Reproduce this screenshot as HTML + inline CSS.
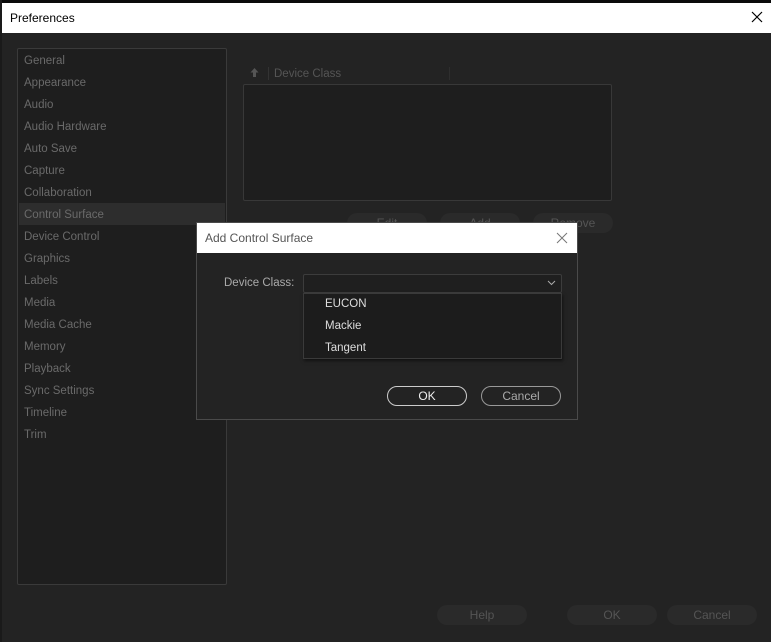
<!DOCTYPE html>
<html><head><style>
*{margin:0;padding:0;box-sizing:border-box}
body{width:771px;height:642px;background:#232323;position:relative;overflow:hidden;font-family:"Liberation Sans",sans-serif;font-size:12px}
.abs{position:absolute;white-space:nowrap}
.side{left:17px;top:48px;width:210px;height:537px;background:#1e1e1e;border:1px solid #3a3a3a;border-radius:2px}
.item{position:absolute;left:6px;color:#6a6a6a;font-size:11.5px;height:22px;line-height:22px;white-space:nowrap}
.sel{left:19px;top:203px;width:206px;height:22px;background:#2d2d2d}
.btn{position:absolute;border-radius:11px;background:#2a2a2a;color:#555;text-align:center;font-size:12px;height:20px;line-height:20px}
</style></head><body>
<div class="abs" style="left:0;top:0;width:771px;height:3px;background:#0a0a0a"></div>
<div class="abs" style="left:0;top:0;width:2px;height:642px;background:#1a1a1a"></div>
<div class="abs" style="left:2px;top:3px;width:769px;height:30px;background:#fff"></div>
<div class="abs" style="left:10px;top:11px;color:#000;font-size:12px">Preferences</div>
<svg class="abs" style="left:751px;top:11px" width="12" height="12"><path d="M1 1L11 11M11 1L1 11" stroke="#000" stroke-width="1.2"/></svg>
<div class="abs side"></div>
<div class="abs sel"></div>
<div class="abs" style="left:18px;top:50px;width:200px">
<div class="item" style="top:0">General</div>
<div class="item" style="top:22px">Appearance</div>
<div class="item" style="top:44px">Audio</div>
<div class="item" style="top:66px">Audio Hardware</div>
<div class="item" style="top:88px">Auto Save</div>
<div class="item" style="top:110px">Capture</div>
<div class="item" style="top:132px">Collaboration</div>
<div class="item" style="top:154px">Control Surface</div>
<div class="item" style="top:176px">Device Control</div>
<div class="item" style="top:198px">Graphics</div>
<div class="item" style="top:220px">Labels</div>
<div class="item" style="top:242px">Media</div>
<div class="item" style="top:264px">Media Cache</div>
<div class="item" style="top:286px">Memory</div>
<div class="item" style="top:308px">Playback</div>
<div class="item" style="top:330px">Sync Settings</div>
<div class="item" style="top:352px">Timeline</div>
<div class="item" style="top:374px">Trim</div>
</div>
<svg class="abs" style="left:250px;top:68px" width="9" height="10"><path d="M4.5 0L8.5 4.5H6V9H3V4.5H0.5Z" fill="#555"/></svg>
<div class="abs" style="left:268px;top:67px;width:1px;height:13px;background:#333"></div>
<div class="abs" style="left:274px;top:68px;color:#555;font-size:11.5px">Device Class</div>
<div class="abs" style="left:449px;top:67px;width:1px;height:13px;background:#2e2e2e"></div>
<div class="abs" style="left:243px;top:84px;width:369px;height:117px;background:#1e1e1e;border:1px solid #383838;border-radius:2px"></div>
<div class="btn" style="left:347px;top:213px;width:80px">Edit</div>
<div class="btn" style="left:440px;top:213px;width:80px">Add</div>
<div class="btn" style="left:533px;top:213px;width:80px">Remove</div>
<div class="btn" style="left:437px;top:605px;width:90px">Help</div>
<div class="btn" style="left:567px;top:605px;width:90px">OK</div>
<div class="btn" style="left:667px;top:605px;width:90px">Cancel</div>

<div class="abs" style="left:196px;top:222px;width:382px;height:198px;background:#232323;border:1px solid #4a4a4a"></div>
<div class="abs" style="left:197px;top:223px;width:380px;height:30px;background:#fff"></div>
<div class="abs" style="left:205px;top:231px;color:#555;font-size:12px">Add Control Surface</div>
<svg class="abs" style="left:556px;top:232px" width="12" height="12"><path d="M1 1L11 11M11 1L1 11" stroke="#777" stroke-width="1"/></svg>
<div class="abs" style="left:224px;top:277px;color:#aaa;font-size:11.5px">Device Class:</div>
<div class="abs" style="left:303px;top:274px;width:259px;height:19px;background:#1f1f1f;border:1px solid #3c3c3c;border-radius:2px"></div>
<svg class="abs" style="left:547px;top:280px" width="9" height="6"><path d="M1 1L4.5 4.5L8 1" stroke="#aaa" fill="none"/></svg>
<div class="abs" style="left:303px;top:293px;width:259px;height:66px;background:#1c1c1c;border:1px solid #3a3a3a;box-shadow:1px 2px 3px rgba(0,0,0,.5)"></div>
<div class="abs" style="left:325px;top:298px;color:#ddd;font-size:11.5px">EUCON</div>
<div class="abs" style="left:325px;top:320px;color:#ddd;font-size:11.5px">Mackie</div>
<div class="abs" style="left:325px;top:342px;color:#ddd;font-size:11.5px">Tangent</div>
<div class="abs" style="left:387px;top:386px;width:80px;height:20px;border:1px solid #ccc;border-radius:10px;color:#eee;text-align:center;line-height:18px;font-size:12px">OK</div>
<div class="abs" style="left:481px;top:386px;width:80px;height:20px;border:1px solid #999;border-radius:10px;color:#aaa;text-align:center;line-height:18px;font-size:12px">Cancel</div>
</body></html>
